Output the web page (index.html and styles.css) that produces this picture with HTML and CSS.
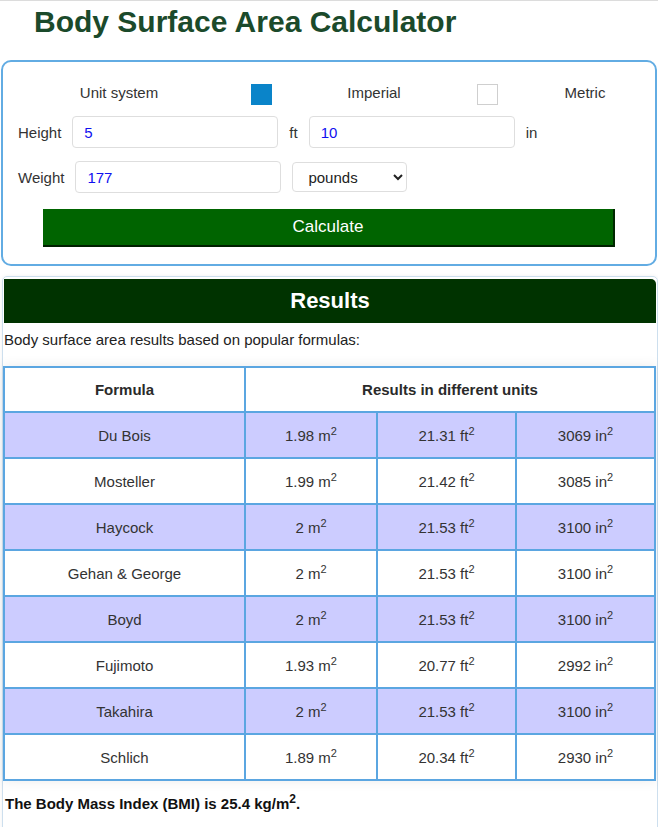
FILE: index.html
```html
<!DOCTYPE html>
<html>
<head>
<meta charset="utf-8">
<title>Body Surface Area Calculator</title>
<link rel="stylesheet" href="styles.css">
</head>
<body>
<div class="page">
  <h1 class="title">Body Surface Area Calculator</h1>
  <form class="calc">
    <div class="units">
      <span class="cell c1">Unit system</span>
      <span class="cell c2"><span class="box checked"></span></span>
      <span class="cell c3">Imperial</span>
      <span class="cell c2"><span class="box"></span></span>
      <span class="cell c5">Metric</span>
    </div>
    <div class="row">
      <span class="lbl">Height</span>
      <input class="field" type="text" value="5">
      <span class="lbl">ft</span>
      <input class="field" type="text" value="10">
      <span class="lbl">in</span>
    </div>
    <div class="row">
      <span class="lbl">Weight</span>
      <input class="field" type="text" value="177">
      <select class="sel"><option>pounds</option></select>
    </div>
    <button class="btn" type="button">Calculate</button>
  </form>
  <section class="results">
    <h2 class="res-head">Results</h2>
    <p class="intro">Body surface area results based on popular formulas:</p>
    <table class="tbl">
      <colgroup><col class="w1"><col class="w2"><col class="w3"><col class="w3"></colgroup>
      <tr><th>Formula</th><th colspan="3">Results in different units</th></tr>
      <tr class="alt"><td>Du Bois</td><td>1.98 m<sup>2</sup></td><td>21.31 ft<sup>2</sup></td><td>3069 in<sup>2</sup></td></tr>
      <tr><td>Mosteller</td><td>1.99 m<sup>2</sup></td><td>21.42 ft<sup>2</sup></td><td>3085 in<sup>2</sup></td></tr>
      <tr class="alt"><td>Haycock</td><td>2 m<sup>2</sup></td><td>21.53 ft<sup>2</sup></td><td>3100 in<sup>2</sup></td></tr>
      <tr><td>Gehan &amp; George</td><td>2 m<sup>2</sup></td><td>21.53 ft<sup>2</sup></td><td>3100 in<sup>2</sup></td></tr>
      <tr class="alt"><td>Boyd</td><td>2 m<sup>2</sup></td><td>21.53 ft<sup>2</sup></td><td>3100 in<sup>2</sup></td></tr>
      <tr><td>Fujimoto</td><td>1.93 m<sup>2</sup></td><td>20.77 ft<sup>2</sup></td><td>2992 in<sup>2</sup></td></tr>
      <tr class="alt"><td>Takahira</td><td>2 m<sup>2</sup></td><td>21.53 ft<sup>2</sup></td><td>3100 in<sup>2</sup></td></tr>
      <tr><td>Schlich</td><td>1.89 m<sup>2</sup></td><td>20.34 ft<sup>2</sup></td><td>2930 in<sup>2</sup></td></tr>
    </table>
    <p class="bmi">The Body Mass Index (BMI) is 25.4 kg/m<sup>2</sup>.</p>
  </section>
</div>
</body>
</html>
```
FILE: styles.css
```css
html, body {
  margin: 0;
  padding: 0;
  background: #fff;
}
body {
  font-family: "Liberation Sans", Arial, sans-serif;
  font-size: 15px;
  color: #333;
}
.page {
  border-top: 1px solid #dcdcdc;
}
.title {
  margin: 3px 0 21px 34px;
  font-size: 30px;
  line-height: 35px;
  font-weight: bold;
  color: #1b4a2b;
}
.calc {
  margin: 0 1px;
  border: 2px solid #62ace3;
  border-radius: 10px;
  padding: 21px 0 17px 15px;
}
.units {
  display: flex;
  align-items: center;
  height: 22px;
  margin-left: 22px;
}
.cell {
  display: flex;
  justify-content: center;
  align-items: center;
  padding-bottom: 3px;
}
.cell.c2 {
  padding-bottom: 0;
}
.c1 { width: 158px; }
.c2 { width: 126px; }
.c3 { width: 100px; }
.c5 { width: 70px; }
.box {
  width: 21px;
  height: 21px;
  box-sizing: border-box;
  border: 1px solid #cfcfcf;
  background: #fff;
}
.box.checked {
  background: #0a84c9;
  border-color: #0a84c9;
}
.row {
  display: flex;
  align-items: center;
  gap: 11px;
  margin-top: 11px;
  height: 32px;
}
.row + .row {
  margin-top: 13px;
}
.field {
  width: 206px;
  height: 32px;
  box-sizing: border-box;
  border: 1px solid #dedede;
  border-radius: 4px;
  padding: 0 0 0 11px;
  font-family: "Liberation Sans", Arial, sans-serif;
  font-size: 15px;
  color: #1010f0;
  background: #fff;
  outline: none;
}
.sel {
  width: 115px;
  height: 30px;
  box-sizing: border-box;
  border: 1px solid #dedede;
  border-radius: 4px;
  padding: 0 0 0 11px;
  font-family: "Liberation Sans", Arial, sans-serif;
  font-size: 15px;
  color: #222;
  background: #fff;
}
.btn {
  display: block;
  width: 572px;
  height: 38px;
  margin: 16px 0 0 25px;
  background: #006400;
  color: #fff;
  border: none;
  border-right: 2px solid #002800;
  border-bottom: 2px solid #002000;
  font-family: "Liberation Sans", Arial, sans-serif;
  font-size: 17px;
  padding: 0;
}
.results {
  margin: 10px 0 0 2px;
  border: 1px solid #cddfee;
  border-radius: 5px;
  padding: 2px 1px 20px 1px;
  box-shadow: 0 0 4px rgba(0, 0, 0, 0.06);
}
.res-head {
  margin: 0;
  height: 44px;
  line-height: 44px;
  background: #003300;
  color: #fff;
  text-align: center;
  font-size: 22px;
  font-weight: bold;
  border-top-right-radius: 5px;
}
.intro {
  margin: 8px 0 0 0;
  line-height: 17px;
  color: #222;
}
.tbl {
  margin: 18px 0 0 -1px;
  width: 651px;
  border-collapse: collapse;
  table-layout: fixed;
  box-shadow: 0 0 12px rgba(0, 0, 0, 0.08);
}
.w1 { width: 241px; }
.w2 { width: 132px; }
.w3 { width: 139px; }
.tbl th, .tbl td {
  border: 2px solid #5ba6e1;
  height: 44px;
  padding: 0;
  text-align: center;
  font-size: 15px;
  color: #333;
  background: #fff;
}
.tbl th {
  font-weight: bold;
  color: #2a2a2a;
  height: 43px;
}
.tbl tr.alt td {
  background: #ccccff;
}
.tbl sup {
  font-size: 11px;
  line-height: 0;
}
.bmi {
  margin: 14px 0 0 1px;
  line-height: 17px;
  font-weight: bold;
  color: #111;
}
.bmi sup {
  font-size: 12px;
  line-height: 0;
}
```
